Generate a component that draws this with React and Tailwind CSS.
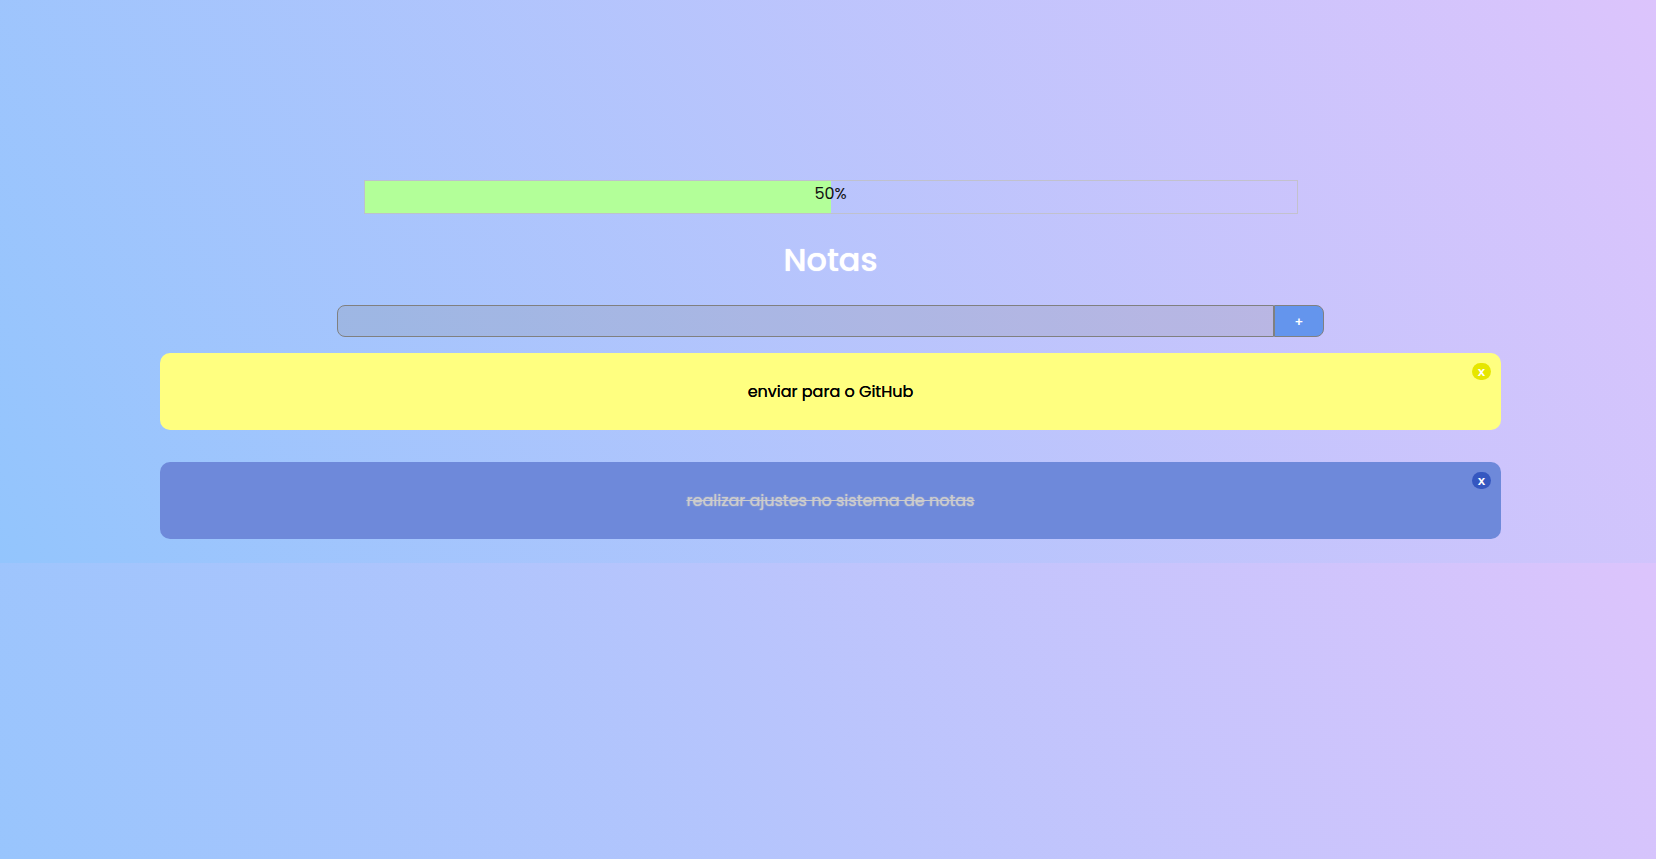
import React from 'react';

const notes = [
  { id: 1, text: 'enviar para o GitHub', done: false },
  { id: 2, text: 'realizar ajustes no sistema de notas', done: true },
];

const Note = ({ note }) => (
  <div
    className={`relative flex h-[77px] items-center justify-center rounded-[10px] ${
      note.done ? 'bg-[#6e89da]' : 'bg-[#ffff80]'
    }`}
  >
    <span
      className={`text-[16px] ${
        note.done
          ? 'text-[#cccccc] line-through [text-shadow:0_0_1.5px_#cccccc]'
          : 'text-black [text-shadow:0_0_0.4px_#000000]'
      }`}
    >
      {note.text}
    </span>
    <button
      className={`absolute right-[10px] top-[10px] flex h-[17px] w-[19px] items-center justify-center rounded-full font-['Liberation_Sans',sans-serif] text-[13.33px] font-bold leading-none text-white ${
        note.done ? 'bg-[#3557c0]' : 'bg-[#e6e600]'
      }`}
    >
      x
    </button>
  </div>
);

export default function App() {
  return (
    <div className="h-screen overflow-hidden bg-[linear-gradient(62deg,#93c5fd_0%,#dcc4fc_100%)] bg-[length:100%_563px] bg-repeat pl-[160px] pt-[180px] font-['Poppins','Inter','Liberation_Sans',sans-serif]">
      <div className="flex w-[1341px] flex-col">
        {/* barra de progresso */}
        <div className="relative mx-auto h-[34px] w-[934px] border border-[#c0c0c0cc]">
          <div className="h-full w-1/2 bg-[#b3ff99]" />
          <span className="absolute left-0 right-0 top-[1px] text-center text-[16px] text-[#111]">50%</span>
        </div>

        <h1 className="mb-[21px] mt-[22px] h-[48px] text-center text-[32px] font-medium leading-[48px] text-white [text-shadow:0_0_1px_#ffffff]">
          Notas
        </h1>

        <form className="mx-auto mb-[16px] flex h-[32px] w-[987px]">
          <input
            type="text"
            className="h-full flex-1 rounded-l-[8px] border border-[#808080] bg-[#80808033] outline-none"
          />
          <button
            type="button"
            className="h-full w-[50px] rounded-r-[8px] border border-[#808080] bg-[#6495ed] pt-[1px] font-['Liberation_Sans',sans-serif] text-[13.33px] font-bold text-white"
          >
            +
          </button>
        </form>

        <div className="flex flex-col gap-[32px]">
          {notes.map((note) => (
            <Note key={note.id} note={note} />
          ))}
        </div>
      </div>
    </div>
  );
}
